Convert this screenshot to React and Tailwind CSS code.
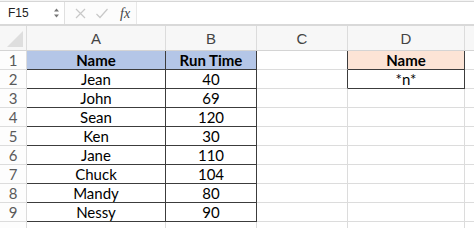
import React from "react";

const cols = [
  { key: "A", w: 139 },
  { key: "B", w: 91 },
  { key: "C", w: 91 },
  { key: "D", w: 117 },
];

const data = [
  ["Name", "Run Time"],
  ["Jean", "40"],
  ["John", "69"],
  ["Sean", "120"],
  ["Ken", "30"],
  ["Jane", "110"],
  ["Chuck", "104"],
  ["Mandy", "80"],
  ["Nessy", "90"],
];

const GRID = "border-[#dcdcdc]";
const DARK = "border-[#3c3c3c]";

function Cell({ children, className = "" }) {
  return (
    <div
      className={`h-[19px] flex items-center justify-center border-r border-b text-[15px] leading-none text-black ${className}`}
      style={{ fontFamily: "Lato, 'Open Sans', sans-serif" }}
    >
      {children}
    </div>
  );
}

export default function App() {
  return (
    <div className="w-[474px] h-[228px] overflow-hidden bg-white relative">
      {/* formula bar */}
      <div className="h-[2px] bg-[#f4f4f4] border-b border-[#d6d6d6]" />
      <div className="h-[22px] flex bg-white" style={{ fontFamily: "'Liberation Sans', Arial, sans-serif" }}>
        <div className="w-[65px] flex items-center justify-between pl-[8px] pr-[4px] border-r border-[#e0e0e0]">
          <span className="text-[12px] text-[#222]">F15</span>
          <svg width="7" height="12" viewBox="0 0 7 12">
            <path d="M1 4.5 L3.5 1.5 L6 4.5 Z" fill="#777" />
            <path d="M1 7.5 L3.5 10.5 L6 7.5 Z" fill="#777" />
          </svg>
        </div>
        <div className="w-[72px] flex items-center border-r border-[#e8e8e8] bg-[#fcfcfc]">
          <svg width="13" height="13" viewBox="0 0 13 13" className="ml-[9px]">
            <path d="M2 2 L11 11 M11 2 L2 11" stroke="#c8c8c8" strokeWidth="1.2" />
          </svg>
          <svg width="14" height="13" viewBox="0 0 14 13" className="ml-[8px]">
            <path d="M1.5 7 L5 10.5 L12.5 2" stroke="#c8c8c8" strokeWidth="1.2" fill="none" />
          </svg>
          <span
            className="ml-[11px] text-[14px] italic text-[#444]"
            style={{ fontFamily: "'Liberation Serif', 'Times New Roman', serif" }}
          >
            fx
          </span>
        </div>
        <div className="flex-1" />
      </div>
      <div className="h-[2px] bg-[#d9d9d9]" />

      {/* column header */}
      <div className="flex h-[25px] bg-[#f7f7f7] border-b border-[#d4d4d4]" style={{ fontFamily: "'Liberation Sans', Arial, sans-serif" }}>
        <div className="w-[27px] border-r border-[#dcdcdc] relative">
          <svg width="18" height="18" viewBox="0 0 18 18" className="absolute right-[2px] bottom-[2px]">
            <path d="M17 1 L17 17 L1 17 Z" fill="#dedede" />
          </svg>
        </div>
        {cols.map((c) => (
          <div
            key={c.key}
            className="flex items-center justify-center pt-[3px] border-r border-[#dcdcdc] text-[15px] text-[#444]"
            style={{ width: c.w }}
          >
            {c.key}
          </div>
        ))}
        <div className="flex-1" />
      </div>

      {/* rows */}
      {Array.from({ length: 10 }).map((_, i) => {
        const row = data[i];
        const n = i + 1;
        const inTable = i < 9;
        return (
          <div key={i} className="flex">
            <div
              className="w-[27px] h-[19px] flex items-center justify-center border-r border-b border-[#dcdcdc] bg-[#fdfdfd] text-[15px] text-[#5a5a5a]"
              style={{ fontFamily: "Lato, 'Open Sans', sans-serif" }}
            >
              {n <= 9 ? n : ""}
            </div>
            <Cell
              className={`w-[139px] ${inTable ? DARK : GRID} ${i === 0 ? "bg-[#b4c6e7] font-bold" : ""}`}
            >
              {row ? row[0] : ""}
            </Cell>
            <Cell
              className={`w-[91px] ${inTable ? DARK : GRID} ${i === 0 ? "bg-[#b4c6e7] font-bold" : ""}`}
            >
              {row ? row[1] : ""}
            </Cell>
            <Cell className={`w-[91px] ${GRID} ${i < 2 ? "border-r-[#3c3c3c]" : ""}`}>{""}</Cell>
            <Cell
              className={`w-[117px] ${i < 2 ? DARK : GRID} ${i === 0 ? "bg-[#fce4d6] font-bold" : ""}`}
            >
              {i === 0 ? "Name" : i === 1 ? "*n*" : ""}
            </Cell>
            <div className="flex-1 h-[19px] border-b border-[#dcdcdc]" />
          </div>
        );
      })}
    </div>
  );
}
